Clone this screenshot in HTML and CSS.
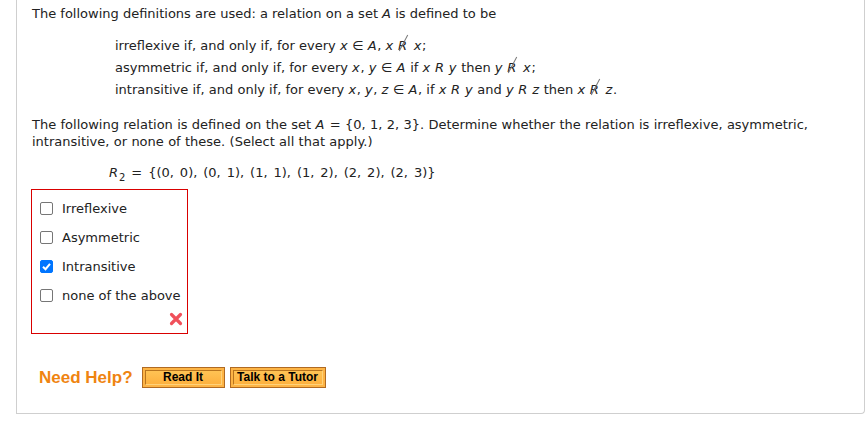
FILE: index.html
```html
<!DOCTYPE html>
<html>
<head>
<meta charset="utf-8">
<link rel="stylesheet" href="styles.css">
</head>
<body>
<div class="card">
  <p class="intro">The following definitions are used: a relation on a set <i>A</i> is defined to be</p>
  <div class="defs">
    <div>irreflexive if, and only if, for every <i>x</i> &isin; <i>A</i>, <i>x</i> <span class="notr"><i>R</i></span> <i>x</i>;</div>
    <div>asymmetric if, and only if, for every <i>x</i>, <i>y</i> &isin; <i>A</i> if <i>x</i> <i>R</i> <i>y</i> then <i>y</i> <span class="notr"><i>R</i></span> <i>x</i>;</div>
    <div>intransitive if, and only if, for every <i>x</i>, <i>y</i>, <i>z</i> &isin; <i>A</i>, if <i>x</i> <i>R</i> <i>y</i> and <i>y</i> <i>R</i> <i>z</i> then <i>x</i> <span class="notr"><i>R</i></span> <i>z</i>.</div>
  </div>
  <p class="question">The following relation is defined on the set <i>A</i> = {0, 1, 2, 3}. Determine whether the relation is irreflexive, asymmetric, intransitive, or none of these. (Select all that apply.)</p>
  <p class="rel"><i>R</i><sub>2</sub> = {(0, 0), (0, 1), (1, 1), (1, 2), (2, 2), (2, 3)}</p>
  <div class="answers">
    <label class="opt"><span class="box"></span>Irreflexive</label>
    <label class="opt"><span class="box"></span>Asymmetric</label>
    <label class="opt"><span class="box checked"><svg viewBox="0 0 13 13" width="13" height="13"><path d="M3 6.8 L5.5 9.2 L10 3.8" fill="none" stroke="#fff" stroke-width="2"/></svg></span>Intransitive</label>
    <label class="opt"><span class="box"></span>none of the above</label>
    <div class="mark"><svg viewBox="0 0 14 14" width="14" height="14"><path d="M2.5 2.5 L11.5 11.5 M11.5 2.5 L2.5 11.5" stroke="#f0505a" stroke-width="3.2" stroke-linecap="round"/></svg></div>
  </div>
  <div class="help">
    <span class="need">Need Help?</span>
    <span class="btn w1"><span class="inner">Read It</span></span>
    <span class="btn w2"><span class="inner">Talk to a Tutor</span></span>
  </div>
</div>
</body>
</html>
```

FILE: styles.css
```css
html, body {
  margin: 0;
  padding: 0;
  background: #fff;
}
body {
  font-family: "DejaVu Sans", Verdana, sans-serif;
  font-size: 13px;
  color: #222;
}
.card {
  margin-left: 16px;
  width: 849px;
  height: 414px;
  box-sizing: border-box;
  border: 1px solid #cfcfcf;
  border-top: none;
  border-bottom-right-radius: 4px;
  padding: 6px 0 0 15px;
}
p { margin: 0; }
.intro { line-height: 16px; }
.defs {
  margin-top: 13px;
  margin-left: 83px;
  line-height: 22px;
}
.defs i { padding-right: 0.6px; }
.notr {
  position: relative;
  display: inline-block;
  margin-right: 2px;
}
.notr::after {
  content: "";
  position: absolute;
  left: 5px;
  top: -1px;
  width: 1px;
  height: 18px;
  background: #777;
  transform: rotate(28deg);
}
.question {
  margin-top: 15px;
  line-height: 17px;
  width: 800px;
  word-spacing: 0.2px;
}
.question i { padding-right: 1px; }
.rel {
  margin-top: 15px;
  margin-left: 77px;
  line-height: 16px;
  word-spacing: 1.8px;
}
.rel i { padding-right: 1px; }
.rel sub {
  font-size: 10px;
  line-height: 0;
  vertical-align: -4px;
}
.answers {
  margin-top: 8px;
  margin-left: -1px;
  width: 157px;
  height: 145px;
  box-sizing: border-box;
  border: 1px solid #d90000;
  padding: 10px 0 0 8px;
  display: flex;
  flex-direction: column;
}
.opt {
  display: flex;
  align-items: center;
  height: 16px;
  margin-bottom: 13px;
  white-space: nowrap;
}
.box {
  width: 13px;
  height: 13px;
  box-sizing: border-box;
  border: 1px solid #767676;
  border-radius: 2px;
  margin-right: 9px;
  background: #fff;
  display: flex;
}
.box.checked {
  background: #0075ff;
  border-color: #0075ff;
}
.box svg { display: block; margin: -1px; }
.mark {
  align-self: flex-end;
  margin-right: 4px;
  margin-top: -4px;
  height: 14px;
}
.mark svg { display: block; }
.help {
  margin-top: 33px;
  margin-left: 7px;
  display: flex;
  align-items: center;
}
.need {
  font-family: "Liberation Sans", Arial, sans-serif;
  font-weight: bold;
  font-size: 17px;
  color: #ef8411;
  margin-right: 9px;
}
.btn {
  display: inline-block;
  height: 21px;
  box-sizing: border-box;
  border: 1px solid #b06a22;
  background: #fdb445;
  padding: 2px;
  margin-right: 5px;
}
.btn.w1 { width: 83px; }
.btn.w2 { width: 96px; }
.inner {
  display: block;
  height: 15px;
  box-sizing: border-box;
  border: 1px solid #b8741e;
  border-right-color: #ffd27a;
  border-bottom-color: #ffd27a;
  background: linear-gradient(#ffc354, #fdb13f);
  font-family: "Liberation Sans", Arial, sans-serif;
  font-weight: bold;
  font-size: 12px;
  line-height: 13px;
  text-align: center;
  color: #000;
}
```
